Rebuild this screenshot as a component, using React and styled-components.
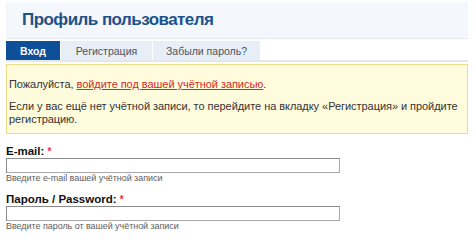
import React from "react";
import styled, { createGlobalStyle } from "styled-components";

const Global = createGlobalStyle`
  html, body { margin: 0; padding: 0; background: #fff; }
  body { font-family: "Liberation Sans", Arial, sans-serif; color: #333; }
`;

const Page = styled.main`
  padding: 2px 6px 0 6px;
  width: 462px;
`;

const Header = styled.header`
  background: #f4f7fb;
  height: 36px;
  display: flex;
  align-items: center;
  padding-left: 16px;
  border-bottom: 1px solid #e6ebf0;
`;

const Title = styled.h1`
  margin: 0;
  font-size: 17px;
  font-weight: bold;
  color: #1d5189;
  letter-spacing: -0.55px;
`;

const Tabs = styled.nav`
  display: flex;
  gap: 1px;
  margin-top: 2px;
  border-bottom: 2px solid #e3e6ea;
`;

const Tab = styled.div`
  height: 19px;
  width: ${(p) => p.$w}px;
  display: flex;
  align-items: center;
  justify-content: center;
  font-size: 10.5px;
  background: ${(p) => (p.$active ? "#0d4f98" : "#e8eef5")};
  color: ${(p) => (p.$active ? "#fff" : "#4a5560")};
  font-weight: ${(p) => (p.$active ? "bold" : "normal")};
`;

const Notice = styled.section`
  box-sizing: border-box;
  margin-top: 2px;
  background: #fffcdd;
  border: 1px solid #f0dc86;
  height: 70px;
  padding: 13px 2px 0 2px;
  font-size: 11px;
  line-height: 12.5px;
  letter-spacing: -0.05px;
  p { margin: 0 0 9.5px 0; }
`;

const Link = styled.a`
  color: #d32a2a;
  text-decoration: underline;
`;

const Field = styled.div`
  margin-top: ${(p) => p.$top}px;
  display: flex;
  flex-direction: column;
`;

const Label = styled.label`
  font-weight: bold;
  font-size: 11.5px;
  color: #111;
  line-height: 12px;
  span { color: #e0313a; font-size: 10px; }
`;

const Input = styled.input`
  box-sizing: border-box;
  width: 334px;
  height: 15px;
  margin: 0;
  border: 1px solid #a9a9a9;
  border-top-color: #8a8a8a;
  border-left-color: #8a8a8a;
  background: #fff;
  padding: 0;
`;

const Hint = styled.small`
  font-size: 9px;
  color: #5e5e5e;
  line-height: 10px;
  letter-spacing: -0.05px;
`;

const App = () => {
  return (
    <Page>
      <Global />
      <Header>
        <Title>Профиль пользователя</Title>
      </Header>
      <Tabs>
        <Tab $active $w={54}>Вход</Tab>
        <Tab $w={91}>Регистрация</Tab>
        <Tab $w={107}>Забыли пароль?</Tab>
      </Tabs>
      <Notice>
        <p>
          Пожалуйста, <Link href="#">войдите под вашей учётной записью</Link>.
        </p>
        <p>
          Если у вас ещё нет учётной записи, то перейдите на вкладку «Регистрация» и пройдите
          регистрацию.
        </p>
      </Notice>
      <Field $top={11}>
        <Label>E-mail: <span>*</span></Label>
        <Input type="text" />
        <Hint>Введите e-mail вашей учётной записи</Hint>
      </Field>
      <Field $top={10}>
        <Label>Пароль / Password: <span>*</span></Label>
        <Input type="password" />
        <Hint>Введите пароль от вашей учётной записи</Hint>
      </Field>
    </Page>
  );
};

export default App;
